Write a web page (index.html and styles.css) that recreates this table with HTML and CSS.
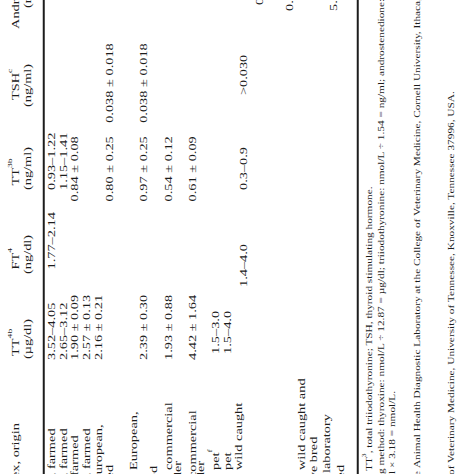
FILE: index.html
```html
<!DOCTYPE html>
<html>
<head>
<meta charset="utf-8">
<title>Thyroid reference values</title>
<link rel="stylesheet" href="styles.css">
</head>
<body>
<div class="page">
  <div class="sheet">
    <div class="ln">
      <div class="c1 n9"><span class="pre">Species,&nbsp;</span>Sex, origin</div>
      <div class="c2 p5">TT<sub>4</sub><sup>b</sup></div>
      <div class="c3 p14">FT<sub>4</sub></div>
      <div class="c4 p13">TT<sub>3</sub><sup>b</sup></div>
      <div class="c5 p18">TSH<sup>c</sup></div>
      <div class="c6 pa1">Andro-</div>
    </div>
    <div class="ln g-h2">
      <div class="c2 p3">(µg/dl)</div>
      <div class="c3 p11">(ng/dl)</div>
      <div class="c4 p10">(ng/ml)</div>
      <div class="c5 p13">(ng/ml)</div>
      <div class="c6 pa2">(ng/ml)</div>
    </div>
    <div class="rule g-r1"></div>

    <div class="ln g-l1">
      <div class="c1 i4"><span class="pre">Male,&nbsp;</span>farmed</div>
      <div class="c2 p2">3.52–4.05</div>
      <div class="c3 p14">1.77–2.14</div>
      <div class="c4 p10">0.93–1.22</div>
    </div>
    <div class="ln">
      <div class="c1 i4"><span class="pre">Female,&nbsp;</span>farmed</div>
      <div class="c2 p2">2.65–3.12</div>
      <div class="c4 p10">1.15–1.41</div>
    </div>
    <div class="ln">
      <div class="c1 n1"><span class="pre">Male,&nbsp;</span>farmed</div>
      <div class="c2 p2">1.90 ± 0.09</div>
      <div class="c4 p1">0.84 ± 0.08</div>
    </div>
    <div class="ln">
      <div class="c1 i4"><span class="pre">Female,&nbsp;</span>farmed</div>
      <div class="c2 p2">2.57 ± 0.13</div>
    </div>
    <div class="ln">
      <div class="c1 n7"><span class="pre">Male,&nbsp;</span>European,</div>
      <div class="c2 p2">2.16 ± 0.21</div>
    </div>
    <div class="ln">
      <div class="c1 i1"><span class="pre">farme</span>d</div>
      <div class="c4 p1">0.80 ± 0.25</div>
      <div class="c5 p1">0.038 ± 0.018</div>
    </div>

    <div class="ln g-l7">
      <div class="c1 i3"><span class="pre">Female,&nbsp;</span>European,</div>
    </div>
    <div class="ln g-l8">
      <div class="c2 p2">2.39 ± 0.30</div>
      <div class="c4 p1">0.97 ± 0.25</div>
      <div class="c5 p1">0.038 ± 0.018</div>
    </div>
    <div class="ln g-l9">
      <div class="c1 i0"><span class="pre">farme</span>d</div>
    </div>

    <div class="ln g-l10">
      <div class="c1 i3"><span class="pre">Male,&nbsp;</span>commercial</div>
      <div class="c2 p2">1.93 ± 0.88</div>
      <div class="c4 p1">0.54 ± 0.12</div>
    </div>
    <div class="ln g-l11">
      <div class="c1 i1"><span class="pre">breed</span>er</div>
    </div>
    <div class="ln g-l12">
      <div class="c1 n3"><span class="pre">Female,&nbsp;</span>commercial</div>
      <div class="c2 p2">4.42 ± 1.64</div>
      <div class="c4 p1">0.61 ± 0.09</div>
    </div>
    <div class="ln g-l13">
      <div class="c1 i1"><span class="pre">breed</span>er</div>
    </div>

    <div class="ln g-l14">
      <div class="c1 i3"><span class="pre">Male,&nbsp;</span>pet<sup>f</sup></div>
      <div class="c2 p7">1.5–3.0</div>
    </div>
    <div class="ln g-l15">
      <div class="c1 i3"><span class="pre">Female,&nbsp;</span>pet</div>
      <div class="c2 p7">1.5–4.0</div>
    </div>
    <div class="ln g-l16">
      <div class="c1 i3"><span class="pre">Male,&nbsp;</span>wild caught</div>
    </div>
    <div class="ln g-l16b">
      <div class="c3 p1">1.4–4.0</div>
      <div class="c4 p10">0.3–0.9</div>
      <div class="c5 p22">&gt;0.030</div>
    </div>

    <div class="ln g-l17">
      <div class="c6 pa4">0.45 ± 0.12</div>
    </div>
    <div class="ln g-l18">
      <div class="c6 pa3">0.39 ± 0.22</div>
    </div>
    <div class="ln g-l19">
      <div class="c1 i3"><span class="pre">Male,&nbsp;</span>wild caught and</div>
    </div>
    <div class="ln g-l20">
      <div class="c1 i1"><span class="pre">captiv</span>e bred</div>
    </div>
    <div class="ln g-l21">
      <div class="c1 i0"><span class="pre">Male,&nbsp;</span>laboratory</div>
    </div>
    <div class="ln g-l22">
      <div class="c6 pa3">5.60 ± 2.10</div>
    </div>
    <div class="ln g-l23">
      <div class="c1 i1"><span class="pre">bre</span>d</div>
    </div>

    <div class="rule g-r2"></div>

    <div class="note g-f1"><span class="pre">a TT<sub>4</sub>, total thyroxine; FT<sub>4</sub>, free thyroxine;&nbsp;</span>TT<sub>3</sub>, total triiodothyronine; TSH, thyroid stimulating hormone.</div>
    <div class="note g-f2 fi0"><span class="pre">b Values converted from SI units usin</span>g method: thyroxine: nmol/L ÷ 12.87 = µg/dl; triiodothyronine: nmol/L ÷ 1.54 = ng/ml; androstenedione: nmol/L ÷ 3.49 = ng/ml;</div>
    <div class="note g-f3 fi0"><span class="pre">progesterone: ng/m</span>l × 3.18 = nmol/L.</div>
    <div class="note g-f4 fi4"><span class="pre">c Analyzed at the&nbsp;</span>Animal Health Diagnostic Laboratory at the College of Veterinary Medicine, Cornell University, Ithaca, New York.</div>
    <div class="note g-f5 fn1"><span class="pre">d Analyzed at the Clinical Endocrinology Service, College&nbsp;</span>of Veterinary Medicine, University of Tennessee, Knoxville, Tennessee 37996, USA.</div>
  </div>
</div>
</body>
</html>
```

FILE: styles.css
```css
html, body {
  margin: 0;
  padding: 0;
  background: #ffffff;
}

.page {
  width: 474px;
  height: 474px;
  overflow: hidden;
  display: flex;
  align-items: center;
  justify-content: center;
  background: #ffffff;
}

/* the table is printed sideways and stretched along its lines */
.sheet {
  flex: none;
  width: 343.5px;
  height: 474px;
  box-sizing: border-box;
  padding-top: 10.2px;
  transform: rotate(-90deg) scaleX(1.38);
  font-family: "Liberation Serif", "Times New Roman", serif;
  font-size: 10.4px;
  color: #1c1c1c;
}

.ln {
  display: grid;
  grid-template-columns: 80px 54px 62px 57px 67px 120px;
  height: 11.6px;
  line-height: 11.6px;
  white-space: nowrap;
}

.ln > div {
  display: flex;
  white-space: nowrap;
  min-width: 0;
}

.c1 { grid-column: 1; }
.c2 { grid-column: 2; }
.c3 { grid-column: 3; }
.c4 { grid-column: 4; }
.c5 { grid-column: 5; }
.c6 { grid-column: 6; }

/* hidden leading text that runs off the cropped edge */
.pre {
  flex: none;
  width: 0;
  display: flex;
  justify-content: flex-end;
  white-space: nowrap;
}

sub, sup {
  font-size: 0.68em;
  line-height: 0;
}
sub { vertical-align: -0.3em; }
sup { vertical-align: 0.45em; }

/* first-column indents */
.i4 { margin-left: 3.6px; }
.i3 { margin-left: 2.9px; }
.i1 { margin-left: 1.4px; }
.i0 { margin-left: 0.7px; }
.n1 { margin-left: -1.4px; }
.n3 { margin-left: -2.9px; }
.n7 { margin-left: -6.5px; }
.n9 { margin-left: -8.7px; }

/* offsets inside columns */
.p1 { padding-left: 1.5px; }
.p2 { padding-left: 2.6px; }
.p3 { padding-left: 3.3px; }
.p5 { padding-left: 5.5px; }
.p7 { padding-left: 7px; }
.p10 { padding-left: 9.8px; }
.p11 { padding-left: 11px; }
.p13 { padding-left: 13px; }
.p14 { padding-left: 14.2px; }
.p18 { padding-left: 18px; }
.p22 { padding-left: 21.6px; }

/* androstenedione column, mostly beyond the crop */
.pa1 { padding-left: 2.5px; }
.pa2 { padding-left: 17.7px; }
.pa3 { padding-left: 15.5px; }
.pa4 { padding-left: 19.9px; }

.rule {
  height: 2px;
  background: #1c1c1c;
  width: 420px;
}

/* vertical rhythm */
.g-h2 { margin-top: 0.4px; }
.g-r1 { margin-top: 9.2px; }
.g-l1 { margin-top: 1.2px; }
.g-l7 { margin-top: 12.4px; }
.g-l8 { margin-top: -2.1px; }
.g-l9 { margin-top: -1.1px; }
.g-l10 { margin-top: 3.4px; }
.g-l11 { margin-top: -2.2px; }
.g-l12 { margin-top: 2.5px; }
.g-l13 { margin-top: -2.7px; }
.g-l14 { margin-top: 3px; }
.g-l15 { margin-top: 0.4px; }
.g-l16 { margin-top: -0.6px; }
.g-l16b { margin-top: -6.6px; }
.g-l17 { margin-top: 4.4px; }
.g-l18 { margin-top: 18.4px; }
.g-l19 { margin-top: 0.4px; }
.g-l20 { margin-top: 0.4px; }
.g-l21 { margin-top: 1.4px; }
.g-l22 { margin-top: -4.6px; }
.g-l23 { margin-top: -4.6px; }
.g-r2 { margin-top: 10.2px; }

.note {
  display: flex;
  height: 11.6px;
  line-height: 11.6px;
  font-size: 8.2px;
  white-space: nowrap;
  margin-left: 2.2px;
}
.fi0 { margin-left: 0; }
.fi4 { margin-left: 4.3px; }
.fn1 { margin-left: -0.7px; }

.g-f1 { margin-top: 5.2px; }
.g-f2 { margin-top: 0.4px; }
.g-f3 { margin-top: -0.6px; }
.g-f4 { margin-top: 13.4px; }
.g-f5 { margin-top: 22.4px; }
```
